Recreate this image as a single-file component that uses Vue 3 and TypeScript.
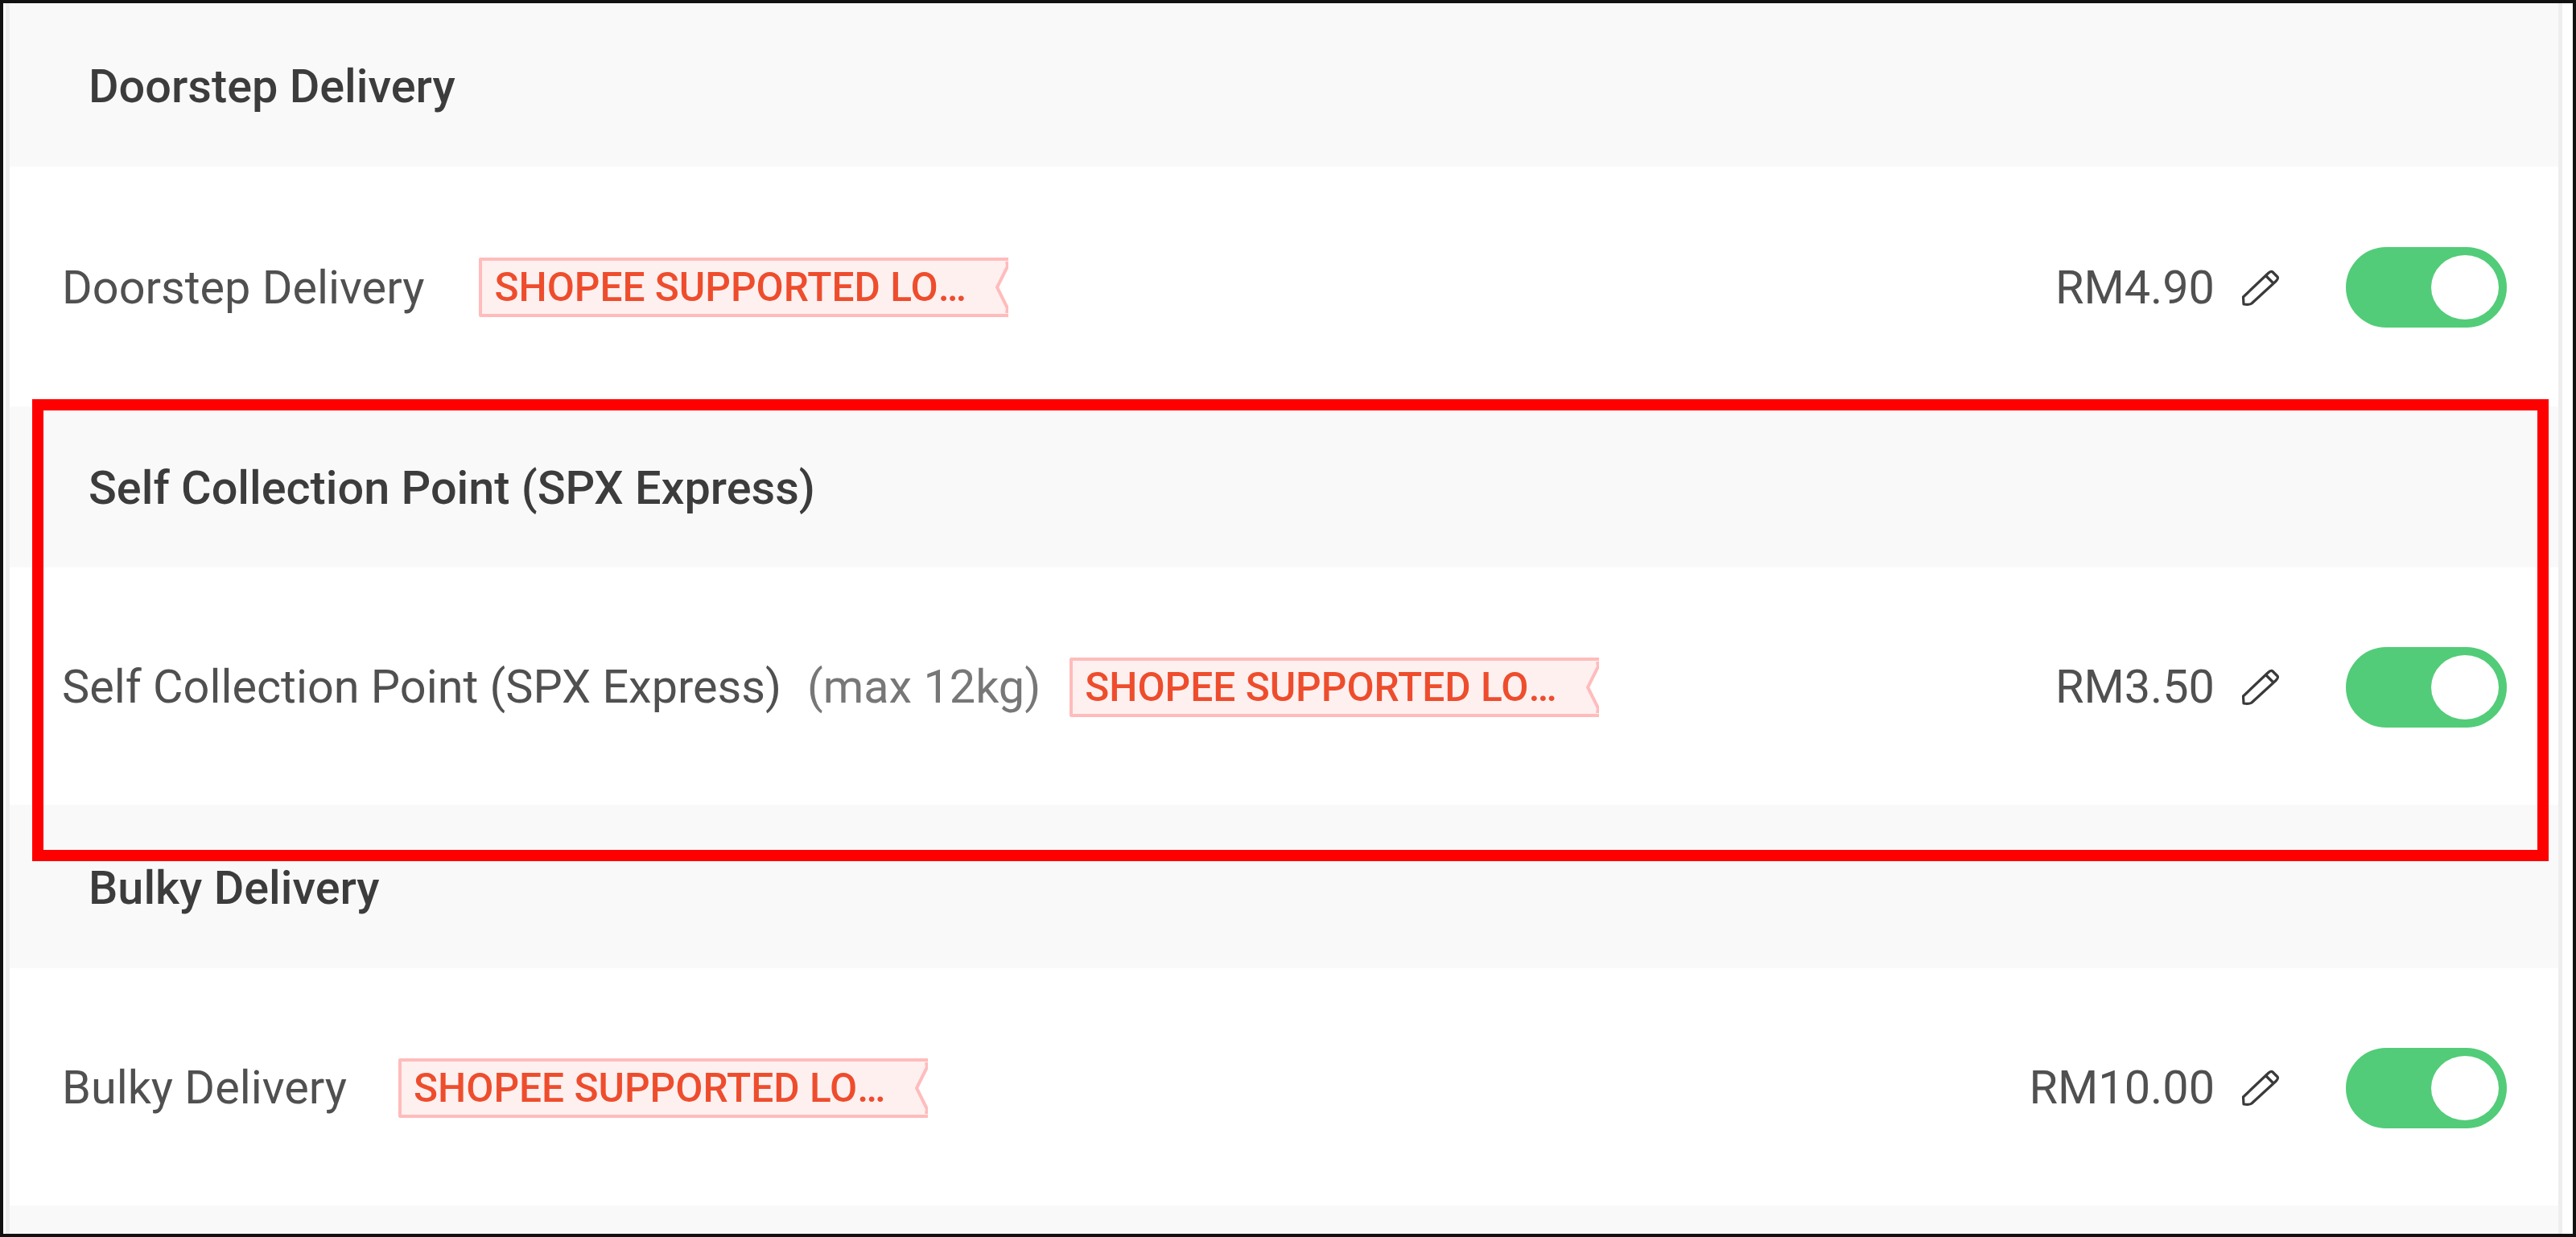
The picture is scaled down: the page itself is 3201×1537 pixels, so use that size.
<script setup lang="ts">
interface Channel {
  title: string
  note?: string
  price: string
}

const channels: Channel[] = [
  { title: 'Doorstep Delivery', price: 'RM4.90' },
  { title: 'Self Collection Point (SPX Express)', note: '(max 12kg)', price: 'RM3.50' },
  { title: 'Bulky Delivery', price: 'RM10.00' },
]
</script>

<template>
  <div class="frame">
    <div class="panel">
      <div class="rail" />
      <div class="list">
        <section v-for="c in channels" :key="c.title">
          <h3 class="group-title">{{ c.title }}</h3>
          <div class="row">
            <span class="name">{{ c.title }}</span>
            <span v-if="c.note" class="note">{{ c.note }}</span>
            <span class="tag">
              <span class="tag-text">SHOPEE SUPPORTED LOGISTICS</span>
              <svg class="tag-notch" viewBox="0 0 20 72" width="20" height="72">
                <path d="M20 10 L7 36 L20 62 Z" fill="#fff" />
                <path d="M18 4 L19 10 L6 36 L19 62 L18 68" fill="none" stroke="#ffbcbc" stroke-width="4" />
              </svg>
            </span>
            <span class="price">{{ c.price }}</span>
            <svg class="pencil" viewBox="0 0 47 45" width="47" height="45">
              <path
                d="M3 43 L2.5 34 L33 5 Q37 1 39 3 L45 9 Q46.500 11 43 14.500 L13 42 Q10 44 3 43 Z M31 8 L41 18"
                fill="none"
                stroke="#3a3a3a"
                stroke-width="3.200"
                stroke-linejoin="round"
              />
            </svg>
            <span class="switch"><span class="knob" /></span>
          </div>
        </section>
        <div class="list-end" />
      </div>
      <div class="rail" />
    </div>
    <div class="highlight" />
  </div>
</template>

<style scoped>
.frame {
  position: relative;
  box-sizing: border-box;
  width: 3201px;
  height: 1537px;
  border: 4px solid #111;
  background: #fff;
  overflow: hidden;
  font-family: Roboto, "Liberation Sans", sans-serif;
}

.panel {
  display: flex;
  height: 100%;
  padding-left: 3px;
  padding-right: 13px;
  box-sizing: border-box;
}

.list {
  flex: 1;
  display: flex;
  flex-direction: column;
  min-width: 0;
}

.rail {
  width: 5px;
  background: #eee;
  flex-shrink: 0;
}

.group-title {
  margin: 0;
  height: 203px;
  box-sizing: border-box;
  padding: 3px 0 0 98px;
  display: flex;
  align-items: center;
  background: #f9f9f9;
  font-size: 57.6px;
  font-weight: 500;
  color: #3c3c3c;
}

section:nth-child(2) .group-title {
  height: 200px;
}

.row {
  height: 295px;
  box-sizing: border-box;
  padding: 2px 64px 0 65px;
  display: flex;
  align-items: center;
  font-size: 57.6px;
  color: #505050;
}

section:first-child .row {
  height: 298px;
}

.name {
  margin-right: 32px;
  white-space: nowrap;
}

.note {
  color: #777;
  white-space: nowrap;
}

.tag {
  position: relative;
  box-sizing: border-box;
  width: 658px;
  height: 74px;
  margin-left: 36px;
  padding: 0 44px 0 15px;
  display: flex;
  align-items: center;
  background: #fff0f0;
  border: 4px solid #ffbcbc;
  border-right: 0;
  border-radius: 3px 0 0 3px;
  font-size: 49.6px;
  font-weight: 500;
  color: #ee4d2d;
}

section:last-of-type .tag {
  margin-left: 32px;
}

.tag-text {
  overflow: hidden;
  white-space: nowrap;
  text-overflow: ellipsis;
}

.tag-notch {
  position: absolute;
  right: 0;
  top: -3px;
}

.price {
  margin-left: auto;
  color: #505050;
}

.pencil {
  margin: 0 83px 0 33px;
  flex-shrink: 0;
}

.switch {
  box-sizing: border-box;
  width: 200px;
  height: 100px;
  padding: 10px;
  display: flex;
  justify-content: flex-end;
  border-radius: 50px;
  background: #52cc78;
  flex-shrink: 0;
}

.knob {
  width: 84px;
  height: 80px;
  border-radius: 50%;
  background: #fff;
}

.list-end {
  flex: 1;
  background: #f9f9f9;
}

/* annotation drawn over the screenshot */
.highlight {
  position: absolute;
  left: 36px;
  top: 492px;
  width: 3127px;
  height: 574px;
  box-sizing: border-box;
  border: 14px solid #f00;
}
</style>
